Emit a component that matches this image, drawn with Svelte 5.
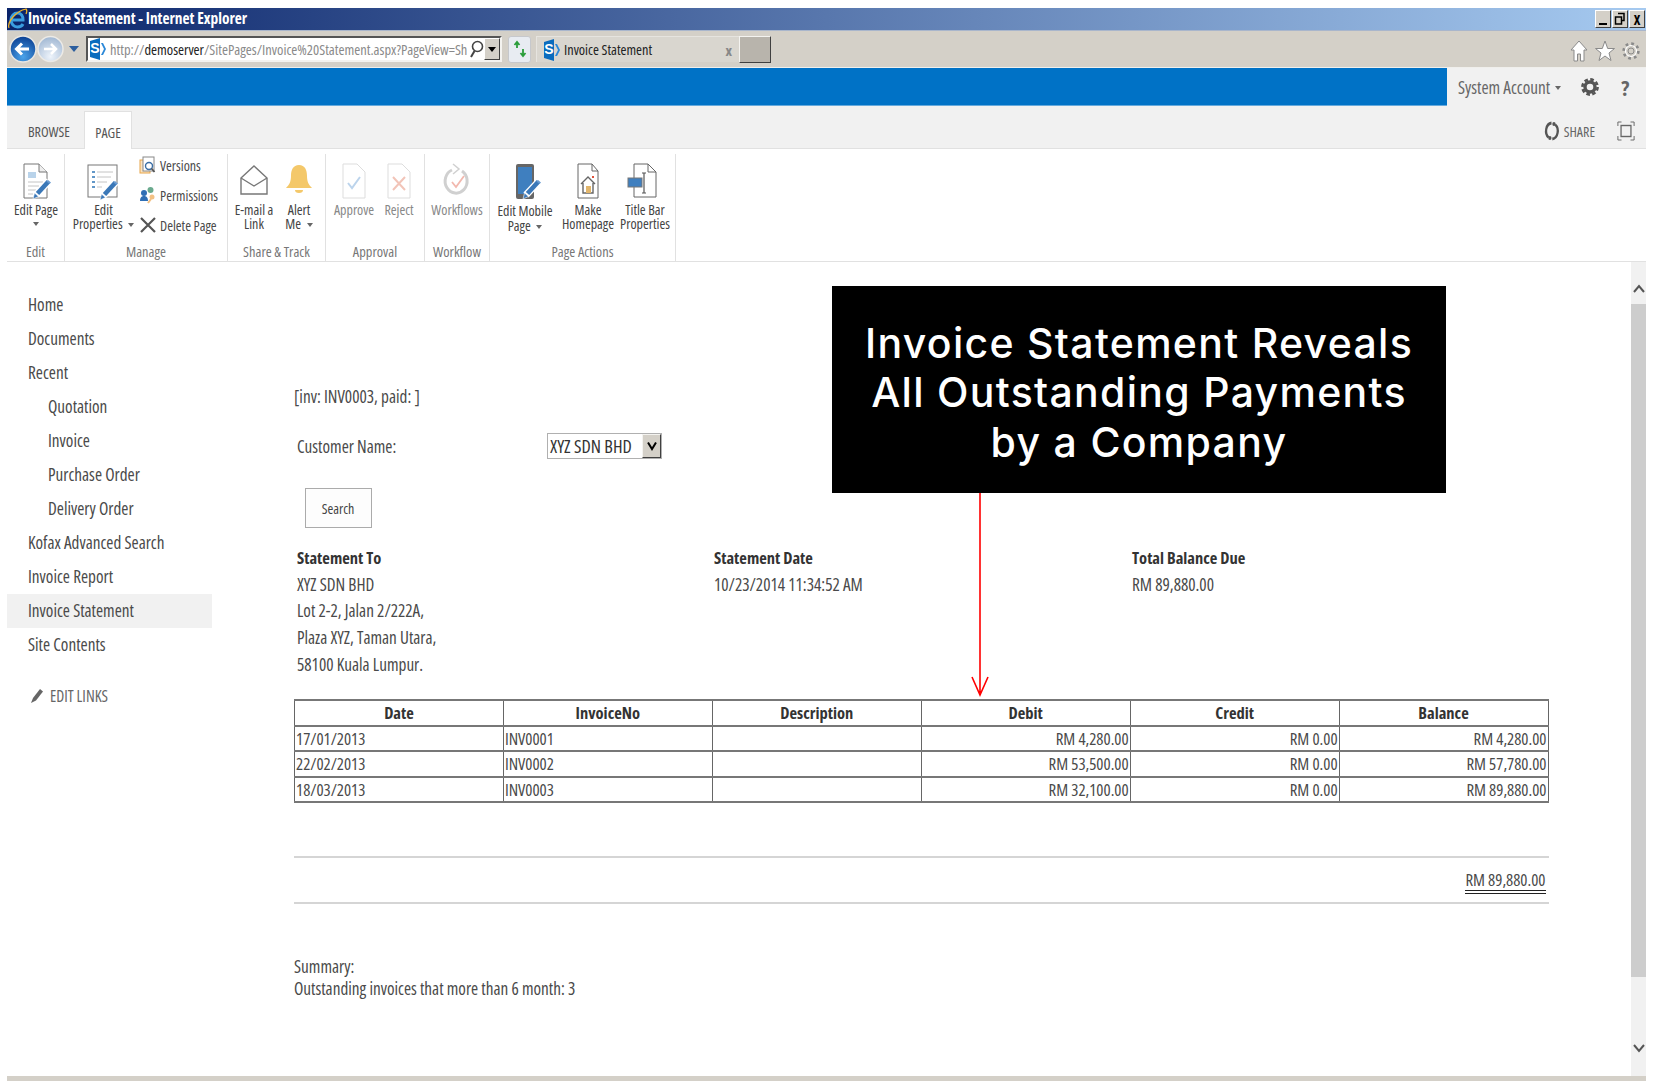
<script>
	const nav = [
		{ label: "Home" },
		{ label: "Documents" },
		{ label: "Recent" },
		{ label: "Quotation", sub: true },
		{ label: "Invoice", sub: true },
		{ label: "Purchase Order", sub: true },
		{ label: "Delivery Order", sub: true },
		{ label: "Kofax Advanced Search" },
		{ label: "Invoice Report" },
		{ label: "Invoice Statement", active: true },
		{ label: "Site Contents" }
	];

	const columns = ["Date", "InvoiceNo", "Description", "Debit", "Credit", "Balance"];

	const invoices = [
		{ date: "17/01/2013", no: "INV0001", debit: "RM 4,280.00", credit: "RM 0.00", balance: "RM 4,280.00" },
		{ date: "22/02/2013", no: "INV0002", debit: "RM 53,500.00", credit: "RM 0.00", balance: "RM 57,780.00" },
		{ date: "18/03/2013", no: "INV0003", debit: "RM 32,100.00", credit: "RM 0.00", balance: "RM 89,880.00" }
	];
</script>

{#snippet spIcon()}
	<svg class="sp" width="18" height="22" viewBox="0 0 18 22">
		<path d="M1 3 11 0v22L1 19z" fill="#0a6cbe" />
		<path d="M12 5h2l3 6-3 6h-2l3-6z" fill="#2b88d8" />
		<text x="6" y="15" text-anchor="middle" class="sp-s">S</text>
	</svg>
{/snippet}

{#snippet pencil(x, y)}
	<g transform="translate({x} {y})">
		<path d="M3 16 16 2" stroke="#fff" stroke-width="7" fill="none" />
		<path d="M4.500 14.500 15.500 2.500" stroke="#3b78b8" stroke-width="4.600" fill="none" />
		<path d="M15 1l3 2.500-1.500 1.500-3-2.500z" fill="#6a9bd0" />
		<path d="M0 20 1.500 14l4 3.500z" fill="#3b78b8" stroke="#fff" stroke-width=".6" />
	</g>
{/snippet}

<div class="page">
	<header class="titlebar">
		<svg class="ie" width="20" height="22" viewBox="0 0 20 22">
			<path d="M4 12h11c0-4-2-7-5.500-7S3 8 3 12s3 7 6.500 7c2.500 0 4.500-1 5.500-3" fill="none" stroke="#3a9de0" stroke-width="3" />
			<path d="M1 20C-1 14 8 3 18 1c1 1 1 3 0 5" fill="none" stroke="#f0b429" stroke-width="1.200" />
		</svg>
		<span class="title">Invoice Statement - Internet Explorer</span>
		<div class="winctl">
			<span class="wb"><i class="wmin"></i></span>
			<span class="wb">
				<svg width="12" height="14" viewBox="0 0 12 14"><path d="M4 1.500h6v7H8M1.500 5h6v7h-6z" fill="none" stroke="#000" stroke-width="1.500" /></svg>
			</span>
			<span class="wb wx">X</span>
		</div>
	</header>

	<div class="toolbar">
		<div class="navbtns">
			<svg width="54" height="30" viewBox="0 0 54 30">
				<defs>
					<radialGradient id="bk" cx=".5" cy=".8" r=".8">
						<stop offset="0" stop-color="#4aa3ea" />
						<stop offset="1" stop-color="#0b3f92" />
					</radialGradient>
					<radialGradient id="fw" cx=".5" cy=".8" r=".8">
						<stop offset="0" stop-color="#eef4fb" />
						<stop offset="1" stop-color="#9fb6d2" />
					</radialGradient>
				</defs>
				<circle cx="41.500" cy="15" r="12.500" fill="url(#fw)" stroke="#eceae6" stroke-width="1.500" />
				<path d="M35 15h12M42 10l5 5-5 5" fill="none" stroke="#fff" stroke-width="2.500" />
				<circle cx="14" cy="15" r="13" fill="url(#bk)" stroke="#e9e7e2" stroke-width="1.500" />
				<path d="M20 15H8M13 9.500 7.500 15l5.500 5.500" fill="none" stroke="#fff" stroke-width="3" />
			</svg>
			<span class="navdrop"></span>
		</div>

		<div class="address">
			{@render spIcon()}
			<span class="url"><span class="dim">http://</span>demoserver<span class="dim">/SitePages/Invoice%20Statement.aspx?PageView=Sh</span></span>
			<svg class="mag" width="16" height="20" viewBox="0 0 16 20">
				<circle cx="9.500" cy="7.500" r="5" fill="none" stroke="#444" stroke-width="1.600" />
				<path d="M6.500 12 3 18" stroke="#444" stroke-width="2" />
			</svg>
			<span class="addrdrop"><i></i></span>
		</div>

		<div class="refresh">
			<svg width="14" height="20" viewBox="0 0 14 20">
				<path d="M4 9V3M1.500 6 4 3l2.500 3" fill="none" stroke="#2a9d3a" stroke-width="1.800" />
				<path d="M10 10v7M7.500 14l2.500 3 2.500-3" fill="none" stroke="#2a9d3a" stroke-width="1.800" />
			</svg>
		</div>

		<div class="iexplore-tab">
			{@render spIcon()}
			<span class="tabtitle">Invoice Statement</span>
			<span class="tabclose">x</span>
		</div>
		<div class="newtab"></div>

		<div class="ietools">
			<svg width="18" height="22" viewBox="0 0 18 22">
				<path d="M9 1 1 10h3v11h3.500v-7h3v7H14V10h3z" fill="#fff" stroke="#8a8a8a" />
			</svg>
			<svg width="20" height="22" viewBox="0 0 20 22">
				<path d="m10 1 2.700 7.500H19.500l-5.500 4.500 2 7.500-6-4.500-6 4.500 2-7.500L.5 8.500h6.800z" fill="#fff" stroke="#8a8a8a" />
			</svg>
			<svg width="18" height="22" viewBox="0 0 18 22">
				<circle cx="9" cy="11" r="7" fill="none" stroke="#8a8a8a" stroke-width="3.400" stroke-dasharray="2.600 2.900" />
				<circle cx="9" cy="11" r="5.500" fill="none" stroke="#fff" stroke-width="1.200" />
				<circle cx="9" cy="11" r="3" fill="none" stroke="#8a8a8a" />
			</svg>
		</div>
	</div>

	<div class="suite">
		<div class="suitebar"></div>
		<div class="account">
			<span class="accname">System Account</span><i class="caret"></i>
			<svg class="acc-gear" width="18" height="20" viewBox="0 0 18 20">
				<circle cx="9" cy="10" r="5" fill="none" stroke="#555" stroke-width="3.400" />
				<circle cx="9" cy="10" r="7.600" fill="none" stroke="#555" stroke-width="2.600" stroke-dasharray="3.600 2.370" />
			</svg>
			<span class="help">?</span>
		</div>
	</div>

	<div class="tabs">
		<span class="tab">BROWSE</span>
		<span class="tab on">PAGE</span>
		<div class="tabs-right">
			<svg width="13" height="20" viewBox="0 0 16 20" preserveAspectRatio="none">
				<path d="M8 2a7.500 8 0 0 0-3.500 14.500M9 18a7.500 8 0 0 0 3.500-14.500" fill="none" stroke="#555" stroke-width="2.800" />
				<circle cx="11" cy="3" r="2" fill="#555" />
				<circle cx="6" cy="17" r="2" fill="#555" />
			</svg>
			<span class="share">SHARE</span>
			<svg class="focus" width="18" height="20" viewBox="0 0 20 20" preserveAspectRatio="none">
				<path d="M1 5V1h4M15 1h4v4M19 15v4h-4M5 19H1v-4" fill="none" stroke="#666" />
				<rect x="4.500" y="4.500" width="11" height="11" fill="none" stroke="#666" stroke-width="1.400" />
			</svg>
		</div>
	</div>

	<div class="ribbon">
		<section class="rg g-edit">
			<div class="rrow">
				<div class="rb w58">
					<svg width="32" height="36" viewBox="0 0 32 36">
						<path d="M4 1h15l8 8v26H4z" fill="#fff" stroke="#777" />
						<path d="M19 1v8h8" fill="#eee" stroke="#777" />
						<rect x="8" y="9" width="8" height="6" fill="#b9d3ea" />
						<path d="M8 19h15M8 23h11M8 27h8M8 31h5" stroke="#c4c4c4" />
						{@render pencil(13, 16)}
					</svg>
					<span>Edit Page</span>
					<i class="caret solo"></i>
				</div>
			</div>
			<h4>Edit</h4>
		</section>

		<section class="rg g-manage">
			<div class="rrow">
				<div class="rb w74">
					<svg width="34" height="36" viewBox="0 0 34 36">
						<rect x="3" y="2" width="29" height="32" fill="#fff" stroke="#777" />
						<path d="M7 9h3M7 14h3M7 19h3M7 24h3" stroke="#2f75b5" stroke-width="1.500" />
						<path d="M12 9h16M12 14h14M12 19h10M12 24h5" stroke="#c4c4c4" />
						{@render pencil(15, 17)}
					</svg>
					<span class="low">Edit<br />Properties <i class="caret"></i></span>
				</div>
				<div class="smalls">
					<div class="rs">
						<svg width="18" height="20" viewBox="0 0 18 20">
							<rect x="1" y="5" width="10" height="13" fill="#fbe3c0" stroke="#e8a64a" />
							<rect x="4" y="2" width="11" height="14" fill="#fff" stroke="#888" />
							<circle cx="10" cy="11" r="3.500" fill="#fff" stroke="#3a6ea5" stroke-width="1.400" />
							<path d="m12.500 13.500 3 3.500" stroke="#555" stroke-width="1.800" />
						</svg>
						<span>Versions</span>
					</div>
					<div class="rs">
						<svg width="18" height="20" viewBox="0 0 18 20">
							<circle cx="11.500" cy="5" r="3" fill="#6aaa8e" />
							<circle cx="5" cy="8" r="3" fill="#2f6fb5" />
							<path d="M1 16c0-4 2-5 4-5s4 1 4 5z" fill="#2f6fb5" />
							<circle cx="13" cy="12" r="2.500" fill="#f3c184" />
							<path d="m12 14-3 4" stroke="#f3c184" stroke-width="2" />
						</svg>
						<span>Permissions</span>
					</div>
					<div class="rs">
						<svg width="18" height="20" viewBox="0 0 18 20">
							<path d="m2 3 14 14M16 3 2 17" stroke="#555" stroke-width="2.200" />
						</svg>
						<span>Delete Page</span>
					</div>
				</div>
			</div>
			<h4>Manage</h4>
		</section>

		<section class="rg g-share">
			<div class="rrow">
				<div class="rb w52">
					<svg width="30" height="36" viewBox="0 0 30 36">
						<path d="M2 15 15 3l13 12v16H2z" fill="#fff" stroke="#777" stroke-width="1.400" />
						<path d="m2 15 13 8 13-8" fill="none" stroke="#777" stroke-width="1.400" />
					</svg>
					<span>E-mail a<br />Link</span>
				</div>
				<div class="rb w38">
					<svg width="28" height="36" viewBox="0 0 28 36">
						<path d="M14 2c-6 0-8 5-8 11 0 6-2 9-5 12h26c-3-3-5-6-5-12 0-6-2-11-8-11z" fill="#f4c86a" />
						<path d="M10 27a4 3 0 0 0 8 0z" fill="#f4c86a" />
					</svg>
					<span>Alert<br />Me <i class="caret"></i></span>
				</div>
			</div>
			<h4>Share &amp; Track</h4>
		</section>

		<section class="rg g-approval">
			<div class="rrow">
				<div class="rb w56 off">
					<svg width="24" height="36" viewBox="0 0 24 36">
						<path d="M1 1h14l8 8v26H1z" fill="#fff" stroke="#ddd" />
						<path d="m6 20 4 5 8-11" fill="none" stroke="#bcd4ec" stroke-width="2" />
					</svg>
					<span>Approve</span>
				</div>
				<div class="rb w34 off">
					<svg width="24" height="36" viewBox="0 0 24 36">
						<path d="M1 1h14l8 8v26H1z" fill="#fff" stroke="#ddd" />
						<path d="m6 14 12 13M18 14 6 27" fill="none" stroke="#f2c4b8" stroke-width="2" />
					</svg>
					<span>Reject</span>
				</div>
			</div>
			<h4>Approval</h4>
		</section>

		<section class="rg g-workflow">
			<div class="rrow">
				<div class="rb w64 off">
					<svg width="28" height="36" viewBox="0 0 28 36">
						<path d="M19 8a11 12 0 1 1-10-1" fill="none" stroke="#d0d0d0" stroke-width="3" />
						<path d="m10 1 6 5-6 5" fill="none" stroke="#d0d0d0" stroke-width="1.500" />
						<path d="m9 19 4 5 8-11" fill="none" stroke="#f2b8ae" stroke-width="1.800" />
					</svg>
					<span>Workflows</span>
				</div>
			</div>
			<h4>Workflow</h4>
		</section>

		<section class="rg g-actions">
			<div class="rrow">
				<div class="rb w70">
					<svg width="30" height="36" viewBox="0 0 30 36">
						<rect x="6" y="1" width="18" height="35" rx="2" fill="#666" />
						<rect x="8" y="4" width="14" height="27" fill="#3f7fbf" />
						{@render pencil(13, 16)}
					</svg>
					<span class="low1">Edit Mobile<br />Page <i class="caret"></i></span>
				</div>
				<div class="rb w56">
					<svg width="24" height="36" viewBox="0 0 24 36">
						<path d="M2 1h14l6 7v27H2z" fill="#fff" stroke="#666" />
						<path d="M16 1v7h6" fill="none" stroke="#666" />
						<path d="m5 21 7-7 7 7M7 20v10h10V20" fill="none" stroke="#666" stroke-width="1.400" />
						<rect x="10" y="23" width="5" height="7" fill="#e2b66c" />
						<rect x="16" y="13" width="2" height="2" fill="#e0503a" />
					</svg>
					<span>Make<br />Homepage</span>
				</div>
				<div class="rb w58">
					<svg width="30" height="36" viewBox="0 0 30 36">
						<path d="M4 1h14l8 8v25H4z" fill="#fff" stroke="#666" />
						<path d="M18 1v8h8" fill="none" stroke="#666" />
						<rect x="-2" y="15" width="14" height="9" fill="#3f7fbf" stroke="#777" />
						<path d="M14 10v20M12 10h4M12 30h4" stroke="#555" stroke-width="1.200" fill="none" />
					</svg>
					<span>Title Bar<br />Properties</span>
				</div>
			</div>
			<h4>Page Actions</h4>
		</section>
	</div>

	<div class="content">
		<nav class="sidebar">
			<ul>
				{#each nav as item}
					<li class:sub={item.sub} class:active={item.active}>{item.label}</li>
				{/each}
			</ul>
			<div class="editlinks">
				<svg width="14" height="16" viewBox="0 0 14 16">
					<path d="M1 15 3 10l7-9 3 2.500-7 9z" fill="#666" />
				</svg>
				<span>EDIT LINKS</span>
			</div>
		</nav>

		<main class="main">
			<p class="debug">[inv: INV0003, paid: ]</p>

			<div class="customer">
				<label for="cust">Customer Name:</label>
				<div class="select" id="cust">
					<span>XYZ SDN BHD</span>
					<b>
						<svg width="12" height="10" viewBox="0 0 12 10"><path d="m2 1.500 4 6.500 4-6.500" fill="none" stroke="#000" stroke-width="2" /></svg>
					</b>
				</div>
			</div>

			<button class="search">Search</button>

			<div class="statement">
				<div>
					<h5>Statement To</h5>
					<p>XYZ SDN BHD</p>
					<p>Lot 2-2, Jalan 2/222A,</p>
					<p>Plaza XYZ, Taman Utara,</p>
					<p>58100 Kuala Lumpur.</p>
				</div>
				<div>
					<h5>Statement Date</h5>
					<p>10/23/2014 11:34:52 AM</p>
				</div>
				<div>
					<h5>Total Balance Due</h5>
					<p>RM 89,880.00</p>
				</div>
			</div>

			<table>
				<thead>
					<tr>
						{#each columns as c}
							<th>{c}</th>
						{/each}
					</tr>
				</thead>
				<tbody>
					{#each invoices as row}
						<tr>
							<td>{row.date}</td>
							<td>{row.no}</td>
							<td></td>
							<td class="num">{row.debit}</td>
							<td class="num">{row.credit}</td>
							<td class="num">{row.balance}</td>
						</tr>
					{/each}
				</tbody>
			</table>

			<div class="total"><span>RM 89,880.00</span></div>

			<div class="summary">
				<p>Summary:</p>
				<p>Outstanding invoices that more than 6 month: 3</p>
			</div>
		</main>

		<aside class="scroll">
			<svg class="sa" width="14" height="10" viewBox="0 0 14 10"><path d="m2 8 5-6 5 6" fill="none" stroke="#555" stroke-width="2" /></svg>
			<div class="thumb"></div>
			<svg class="sa" width="14" height="10" viewBox="0 0 14 10"><path d="m2 2 5 6 5-6" fill="none" stroke="#555" stroke-width="2" /></svg>
		</aside>
	</div>
	<div class="statusline"></div>

	<!-- callout drawn over the page -->
	<div class="callout">Invoice Statement Reveals<br />All Outstanding Payments<br />by a Company</div>
	<svg class="arrow" width="20" height="204" viewBox="0 0 20 204">
		<path d="M10 0v202M2 184l8 18 8-18" fill="none" stroke="#f00" stroke-width="1.600" />
	</svg>
</div>

<style>
:global(body) {
	margin: 0;
	background: #fff;
}

.page {
	position: relative;
	box-sizing: border-box;
	width: 1658px;
	height: 1090px;
	padding: 8px 12px 0 7px;
	overflow: hidden;
	font-family: "Open Sans", "Liberation Sans", Arial, sans-serif;
	font-stretch: 80%;
	font-size: 17.200px;
	color: #4a4a4a;
}

svg {
	display: block;
	flex: none;
	overflow: visible;
}

.titlebar {
	display: flex;
	align-items: center;
	height: 22px;
	padding-left: 1px;
	background: linear-gradient(90deg, #0a246a, #a6caf0);
	border-bottom: 1px solid #a9b6cc;
}

.title {
	margin-top: -2px;
	color: #fff;
	font-weight: 700;
	font-size: 15.400px;
}

.winctl {
	display: flex;
	gap: 1px;
	margin-left: auto;
	margin-right: 1px;
}

.wb {
	box-sizing: border-box;
	display: flex;
	align-items: center;
	justify-content: center;
	width: 16px;
	height: 18px;
	background: #d4d0c8;
	border: 1px solid;
	border-color: #fff #404040 #404040 #fff;
	color: #000;
	font-weight: 700;
	font-size: 14px;
}

.wmin {
	display: block;
	width: 8px;
	height: 2px;
	margin-top: 9px;
	background: #000;
}

.toolbar {
	display: flex;
	align-items: center;
	box-sizing: border-box;
	height: 37px;
	background: #d4d0c8;
	border-bottom: 1px solid #f0efec;
}

.navbtns {
	display: flex;
	align-items: center;
	width: 79px;
	padding-left: 2px;
	box-sizing: border-box;
}

.navdrop {
	margin-left: 6px;
	border: 5px solid transparent;
	border-top: 6px solid #2c5e9e;
	border-bottom: 0;
}

.address {
	display: flex;
	align-items: center;
	box-sizing: border-box;
	width: 416px;
	height: 26px;
	background: #fff;
	border: 2px solid;
	border-color: #555 #f4f3f0 #f4f3f0 #555;
	overflow: hidden;
}

.sp {
	margin-left: 1px;
}

.sp-s {
	fill: #fff;
	font: 700 14px "Liberation Sans", sans-serif;
}

.url {
	margin-left: 3px;
	width: 360px;
	overflow: hidden;
	white-space: nowrap;
	color: #222;
	font-size: 14.500px;
}

.dim {
	color: #8a8a8a;
}

.mag {
	margin-left: 1px;
}

.addrdrop {
	display: flex;
	align-items: center;
	justify-content: center;
	box-sizing: border-box;
	width: 16px;
	height: 22px;
	background: #d4d0c8;
	border: 1px solid;
	border-color: #fff #404040 #404040 #fff;
}

.addrdrop i {
	border: 4px solid transparent;
	border-top: 5px solid #000;
	border-bottom: 0;
}

.refresh {
	display: flex;
	align-items: center;
	justify-content: center;
	box-sizing: border-box;
	width: 23px;
	height: 27px;
	margin-left: 6px;
	background: #e8ecf2;
	border: 1px solid #c6c8cc;
	border-radius: 3px;
}

.iexplore-tab {
	display: flex;
	align-items: center;
	box-sizing: border-box;
	width: 203px;
	height: 26px;
	margin-left: 5px;
	background: #d9d6cf;
	border-left: 1px solid #e6e4df;
	border-top: 1px solid #e6e4df;
}

.iexplore-tab .sp {
	margin-left: 6px;
}

.tabtitle {
	margin-left: 3px;
	color: #222;
	font-size: 14.300px;
}

.tabclose {
	margin-left: auto;
	margin-right: 7px;
	color: #888;
	font-weight: 700;
	font-size: 15px;
}

.newtab {
	box-sizing: border-box;
	width: 32px;
	height: 27px;
	background: #b8b4ac;
	border: 1px solid;
	border-color: #f4f3f0 #404040 #404040 #f4f3f0;
}

.ietools {
	display: flex;
	align-items: center;
	gap: 7px;
	margin-left: auto;
	margin-right: 6px;
	margin-top: 4px;
}

.suite {
	display: flex;
	height: 38px;
	background: #f1f1f1;
}

.suitebar {
	width: 1440px;
	background: #0072c6;
	border-bottom: 1px solid #66aadd;
}

.account {
	display: flex;
	align-items: center;
	flex: 1;
	padding-left: 11px;
	color: #666;
	font-size: 17.200px;
	white-space: nowrap;
}

.caret {
	display: inline-block;
	margin-left: 3px;
	border: 3.500px solid transparent;
	border-top: 4px solid #666;
	border-bottom: 0;
	vertical-align: middle;
}

.account .caret {
	margin-left: 5px;
	margin-top: 2px;
}

.caret.solo {
	display: block;
	width: 0;
	margin: 5px auto 0;
}

.acc-gear {
	margin-left: 20px;
}

.help {
	margin-left: 22px;
	font-weight: 700;
	font-size: 22px;
}

.tabs {
	display: flex;
	box-sizing: border-box;
	align-items: flex-end;
	height: 43px;
	padding-left: 11px;
	background: #f1f1f1;
	border-bottom: 1px solid #e1e1e1;
}

.tab {
	box-sizing: border-box;
	display: flex;
	align-items: center;
	width: 66px;
	height: 37px;
	padding: 3px 0 0 10px;
	color: #555;
	font-size: 14px;
}

.tab.on {
	justify-content: center;
	width: 48px;
	margin-bottom: -1px;
	padding: 3px 0 0;
	height: 38px;
	background: #fff;
	border: 1px solid #e1e1e1;
	border-bottom: 0;
}

.tabs-right {
	display: flex;
	align-items: center;
	align-self: center;
	margin-top: 8px;
	margin-left: auto;
	margin-right: 11px;
}

.share {
	margin-left: 6px;
	color: #666;
	font-size: 14px;
}

.focus {
	margin-left: 22px;
}

.ribbon {
	display: flex;
	height: 113px;
	box-sizing: border-box;
	padding-top: 5px;
	background: #fff;
	border-bottom: 1px solid #e1e1e1;
}

.rg {
	display: flex;
	flex-direction: column;
	box-sizing: border-box;
	height: 107px;
	border-right: 1px solid #e1e1e1;
}

.g-edit { width: 58px; }
.g-manage { width: 163px; }
.g-share { width: 98px; }
.g-approval { width: 99px; }
.g-workflow { width: 65px; }
.g-actions { width: 186px; }

.rrow {
	display: flex;
	flex: 1;
	min-height: 0;
}

.rg h4 {
	margin: 0;
	height: 18px;
	line-height: 18px;
	text-align: center;
	font-weight: 400;
	font-size: 14.400px;
	color: #777;
}

.rb {
	flex: none;
	padding-top: 9px;
	font-size: 14px;
	line-height: 14px;
	color: #444;
	text-align: center;
}

.rb svg {
	margin: 0 auto 4px;
}

.rb span {
	display: block;
	white-space: nowrap;
}

.rb .low {
	margin-top: 2px;
	padding-left: 3px;
}

.rb .low1 {
	margin-top: 1px;
	line-height: 15px;
}

.rb.off {
	color: #888;
}

.w34 { width: 34px; }
.w38 { width: 38px; }
.w52 { width: 52px; }
.w56 { width: 56px; }
.w58 { width: 58px; }
.w64 { width: 64px; }
.w70 { width: 70px; }
.w74 { width: 74px; }

.smalls {
	margin-top: -4px;
	flex: 1;
}

.rs {
	display: flex;
	align-items: center;
	gap: 3px;
	height: 30px;
	font-size: 14px;
	white-space: nowrap;
}

.content {
	display: flex;
	height: 814px;
	background: #fff;
}

.sidebar {
	box-sizing: border-box;
	width: 287px;
	padding-top: 25.500px;
}

.sidebar ul {
	margin: 0;
	padding: 0;
	list-style: none;
}

.sidebar li {
	box-sizing: border-box;
	width: 205px;
	height: 34.050px;
	line-height: 34.050px;
	padding-left: 21px;
}

.sidebar li.sub {
	padding-left: 41px;
}

.sidebar li.active {
	background: #f1f1f1;
}

.editlinks {
	display: flex;
	align-items: center;
	gap: 6px;
	margin-top: 22.500px;
	padding-left: 23px;
	font-size: 15.700px;
	color: #666;
}

.main {
	width: 1254.500px;
	padding-top: 125px;
}

.main p {
	margin: 0;
}

.debug {
	line-height: 20px;
}

.customer {
	display: flex;
	align-items: center;
	margin-top: 26px;
	padding-left: 3px;
}

.customer label {
	width: 250px;
}

.select {
	display: flex;
	box-sizing: border-box;
	width: 115px;
	height: 26px;
	background: #fff;
	border: 1px solid #b0b0b0;
	line-height: 24px;
	color: #333;
	white-space: nowrap;
}

.select span {
	flex: 1;
	padding-left: 2px;
	font-size: 18.200px;
}

.select b {
	display: flex;
	align-items: center;
	justify-content: center;
	box-sizing: border-box;
	width: 19px;
	background: #d4d0c8;
	border: 1px solid;
	border-color: #f4f3f0 #404040 #404040 #f4f3f0;
}

.search {
	display: block;
	box-sizing: border-box;
	width: 67px;
	height: 40px;
	margin: 29px 0 0 10.500px;
	background: #fdfdfd;
	border: 1px solid #ababab;
	font: inherit;
	font-size: 14px;
	color: #444;
}

.statement {
	display: grid;
	grid-template-columns: 417px 418px 1fr;
	margin-top: 17px;
	padding-left: 3px;
	line-height: 26.700px;
}

.statement h5 {
	margin: 0;
	font-size: 16.500px;
	font-weight: 700;
	color: #333;
}

table {
	width: 100%;
	margin-top: 20px;
	table-layout: fixed;
	border-collapse: collapse;
}

th,
td {
	padding: 1px 1px 0;
	border: 1px solid #666;
	border-top-width: 2px;
	border-bottom-width: 2px;
	border-top-color: #777;
	border-bottom-color: #777;
	height: 22.300px;
	line-height: 20px;
	font-size: 16.800px;
}

th {
	height: 23.500px;
	font-size: 16.500px;
	font-weight: 700;
	color: #333;
}

.num {
	text-align: right;
}

.total {
	display: flex;
	justify-content: flex-end;
	box-sizing: border-box;
	height: 48px;
	margin-top: 53.500px;
	padding: 12px 3px 0 0;
	border-top: 2px solid #d5d5d5;
	border-bottom: 2px solid #d5d5d5;
	font-size: 16.800px;
}

.total span {
	height: 24px;
	line-height: 20px;
	border-bottom: 4px double #222;
	box-sizing: border-box;
}

.summary {
	margin-top: 52px;
	line-height: 22px;
}

.scroll {
	display: flex;
	flex-direction: column;
	align-items: center;
	box-sizing: border-box;
	width: 15px;
	margin-left: auto;
	padding: 22px 0 22px;
	background: #f1f1f1;
}

.thumb {
	align-self: stretch;
	height: 673px;
	margin: 10px 0 66px;
	background: #cdcdcd;
}

.statusline {
	height: 5px;
	background: #d4d0c8;
}

.callout {
	position: absolute;
	left: 832px;
	top: 286px;
	box-sizing: border-box;
	width: 614px;
	height: 207px;
	padding-top: 33px;
	background: #000;
	color: #fff;
	text-align: center;
	font-family: Inter, "Open Sans", sans-serif;
	font-stretch: 100%;
	font-size: 41px;
	font-weight: 500;
	letter-spacing: 1.300px;
	line-height: 49.300px;
}

.arrow {
	position: absolute;
	left: 970px;
	top: 493px;
}
</style>
